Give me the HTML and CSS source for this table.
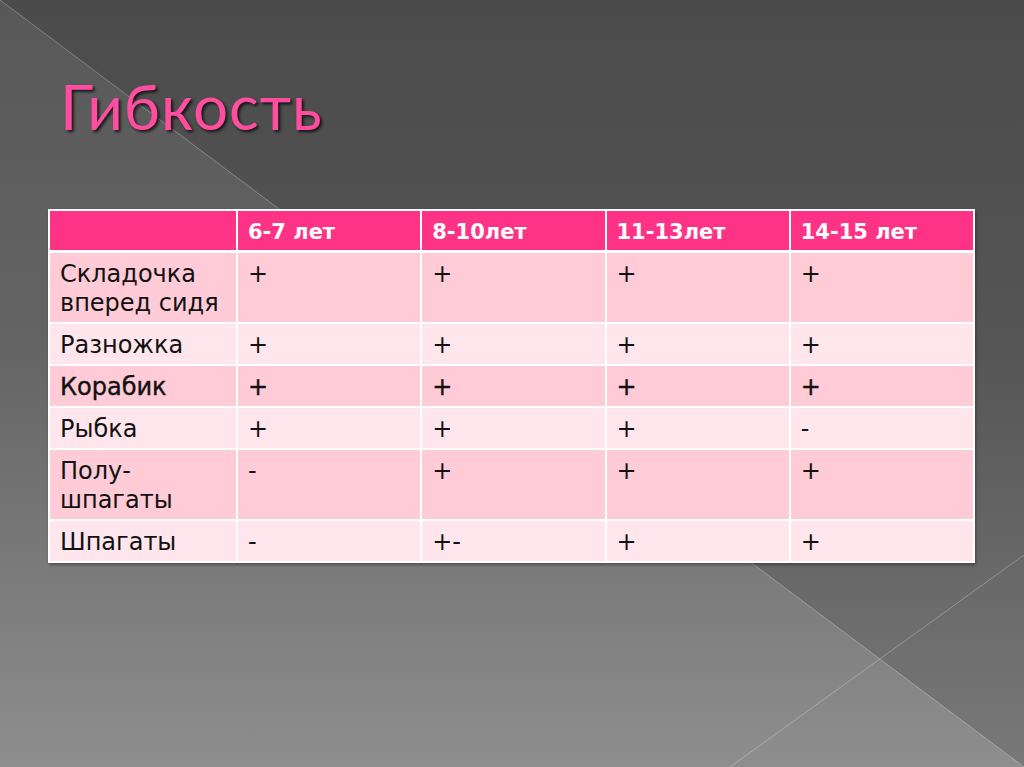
FILE: index.html
```html
<!DOCTYPE html>
<html lang="ru">
<head>
<meta charset="utf-8">
<title>Гибкость</title>
<link rel="stylesheet" href="styles.css">
</head>
<body>
<main class="slide">
  <h1 class="title">Гибкость</h1>
  <table class="grid">
    <thead>
      <tr>
        <th></th>
        <th>6-7 лет</th>
        <th>8-10лет</th>
        <th>11-13лет</th>
        <th>14-15 лет</th>
      </tr>
    </thead>
    <tbody>
      <tr class="odd">
        <td>Складочка<br>вперед сидя</td>
        <td>+</td><td>+</td><td>+</td><td>+</td>
      </tr>
      <tr class="even">
        <td>Разножка</td>
        <td>+</td><td>+</td><td>+</td><td>+</td>
      </tr>
      <tr class="odd strong">
        <td>Корабик</td>
        <td>+</td><td>+</td><td>+</td><td>+</td>
      </tr>
      <tr class="even">
        <td>Рыбка</td>
        <td>+</td><td>+</td><td>+</td><td>-</td>
      </tr>
      <tr class="odd">
        <td>Полу-<br>шпагаты</td>
        <td>-</td><td>+</td><td>+</td><td>+</td>
      </tr>
      <tr class="even">
        <td>Шпагаты</td>
        <td>-</td><td>+-</td><td>+</td><td>+</td>
      </tr>
    </tbody>
  </table>
</main>
</body>
</html>
```

FILE: styles.css
```css
html, body {
  margin: 0;
  padding: 0;
  width: 1024px;
  height: 767px;
  overflow: hidden;
}

body {
  font-family: "DejaVu Sans", "Liberation Sans", sans-serif;
  background:
    linear-gradient(to top left, transparent calc(50% - 0.8px), rgba(255,255,255,0.28) 50%, transparent calc(50% + 0.8px)) right bottom / 294px 212px no-repeat,
    linear-gradient(to top right, transparent calc(50% - 0.8px), rgba(255,255,255,0.28) 50%, transparent calc(50% + 0.8px)),
    linear-gradient(to top right, transparent 50%, rgba(0,0,0,0.15) 50%),
    linear-gradient(#585858 0%, #646464 45%, #8e8e8e 100%);
}

.slide {
  display: flex;
  flex-direction: column;
  padding: 66px 0 0 48px;
}

.title {
  margin: 0 0 0 12px;
  font-family: "Lato", "DejaVu Sans", sans-serif;
  font-weight: 400;
  font-size: 62px;
  line-height: 80px;
  color: #ff4ea0;
  text-shadow: 2px 2px 3px rgba(0,0,0,0.75);
  letter-spacing: 1px;
}

.grid {
  margin-top: 63px;
  width: 927px;
  border-collapse: collapse;
  table-layout: fixed;
  border: 2px solid #f2f2f2;
  box-shadow: 1px 2px 3px rgba(0,0,0,0.35);
}

.grid th,
.grid td {
  border: 2px solid #ffffff;
  padding: 7px 10px 4px 10px;
  text-align: left;
  vertical-align: top;
  line-height: 29px;
}

.grid th:first-child,
.grid td:first-child {
  width: 166px;
}

.grid th {
  background: #ff3385;
  color: #ffffff;
  font-weight: 700;
  font-size: 21px;
  line-height: 28px;
  border-bottom-width: 3px;
}

.grid td {
  color: #111111;
  font-size: 24px;
  font-weight: 400;
}

.grid tr.odd td {
  background: #ffcbd7;
}

.grid tr.even td {
  background: #ffe6ec;
}

.grid tr.strong td {
  -webkit-text-stroke: 0.4px #111111;
}
```
